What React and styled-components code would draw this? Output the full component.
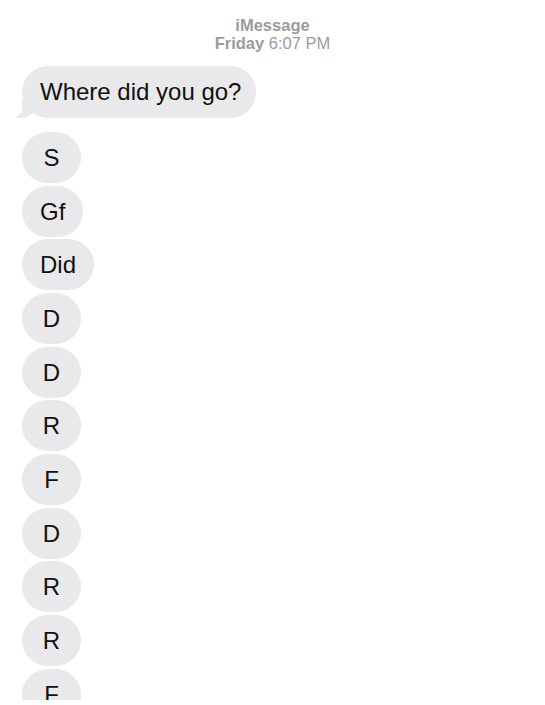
import styled, { createGlobalStyle } from 'styled-components';

const GlobalStyle = createGlobalStyle`
  html, body {
    margin: 0;
    padding: 0;
    background: #ffffff;
  }

  body {
    font-family: "Liberation Sans", Arial, sans-serif;
    -webkit-font-smoothing: antialiased;
  }
`;

const Screen = styled.div`
  width: 545px;
  height: 705px;
  overflow: hidden;
  background: #ffffff;
`;

const Conversation = styled.div`
  height: 700px;
  overflow: hidden;
  display: flex;
  flex-direction: column;
`;

const Header = styled.header`
  padding-top: 16px;
  display: flex;
  flex-direction: column;
  align-items: center;
  font-size: 16.5px;
  line-height: 18px;
  color: #9b9b9f;
`;

const Service = styled.span`
  font-weight: 700;
`;

const Stamp = styled.span`
  font-weight: 400;

  b {
    font-weight: 700;
  }
`;

const Thread = styled.div`
  margin-top: 14px;
  padding-left: 22px;
  display: flex;
  flex-direction: column;
  align-items: flex-start;
  gap: 2.7px;
`;

const Bubble = styled.div`
  position: relative;
  box-sizing: border-box;
  height: ${p => (p.$tail ? '52px' : '51px')};
  min-width: 59px;
  padding: ${p => (p.$tail ? '0 15px 0 18px' : '0 18px')};
  margin-bottom: ${p => (p.$tail ? '11.3px' : '0')};
  border-radius: 26px;
  background: #e9e9eb;
  color: #111111;
  font-size: 24px;
  line-height: ${p => (p.$tail ? '52px' : '51px')};
  text-align: center;
  white-space: nowrap;

  ${p =>
    p.$tail &&
    `
    &::before {
      content: "";
      position: absolute;
      left: -6px;
      bottom: 0;
      width: 20px;
      height: 18px;
      background: #e9e9eb;
      border-bottom-right-radius: 16px 14px;
    }

    &::after {
      content: "";
      position: absolute;
      left: -10px;
      bottom: 0;
      width: 10px;
      height: 20px;
      background: #ffffff;
      border-bottom-right-radius: 10px;
    }
  `}
`;

const messages = ['S', 'Gf', 'Did', 'D', 'D', 'R', 'F', 'D', 'R', 'R', 'F'];

export default function App() {
  return (
    <Screen>
      <GlobalStyle />
      <Conversation>
        <Header>
          <Service>iMessage</Service>
          <Stamp>
            <b>Friday</b> 6:07 PM
          </Stamp>
        </Header>
        <Thread>
          <Bubble $tail>Where did you go?</Bubble>
          {messages.map((text, i) => (
            <Bubble key={i}>{text}</Bubble>
          ))}
        </Thread>
      </Conversation>
    </Screen>
  );
}
